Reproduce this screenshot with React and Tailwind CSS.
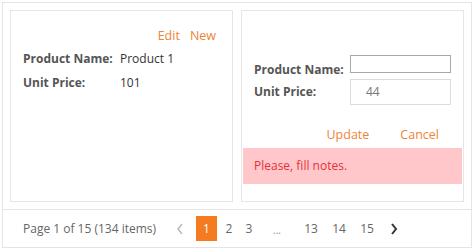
export default function App() {
  const font = "font-['Open_Sans','Noto_Sans',sans-serif]";
  return (
    <div className={`p-[2px] w-[474px] h-[250px] bg-white ${font} text-[12px] whitespace-nowrap`}>
      <div className="border border-[#e4e4e4] w-[470px] h-[246px] flex flex-col">
        <div className="flex gap-[8px] px-[7px] pt-[7px] pb-[7px] border-b border-[#e4e4e4]">
          {/* Card 1 */}
          <div className="flex-1 h-[192px] border border-[#e6e6e6] flex flex-col">
            <div className="flex justify-end items-center gap-[10px] pr-[16px] pt-[14px] h-[37px] text-[#ef8338] text-[12.5px]">
              <span>Edit</span>
              <span>New</span>
            </div>
            <div className="grid grid-cols-[97px_1fr] gap-y-[6px] pl-[12px] mt-[2px] leading-[18px]">
              <span className="font-bold text-[#555]">Product Name:</span>
              <span className="text-[#333]">Product 1</span>
              <span className="font-bold text-[#555]">Unit Price:</span>
              <span className="text-[#333]">101</span>
            </div>
          </div>
          {/* Card 2 */}
          <div className="flex-1 h-[192px] border border-[#e6e6e6] flex flex-col">
            <div className="grid grid-cols-[96px_101px] grid-rows-[24px_26px] pl-[12px] pt-[44px] leading-[18px]">
              <span className="font-bold text-[#555] self-end">Product Name:</span>
              <div className="h-[18px] self-start border border-[#a8a8a8] bg-white"></div>
              <span className="font-bold text-[#555] self-center">Unit Price:</span>
              <div className="h-[26px] border border-[#dcdcdc] bg-white flex items-center pl-[15px] text-[#777]">44</div>
            </div>
            <div className="flex justify-end gap-[31px] pr-[24px] mt-[18px] h-[24px] items-center text-[#ef8338] text-[12.5px]">
              <span>Update</span>
              <span>Cancel</span>
            </div>
            <div className="mx-[1px] mt-[1px] h-[36px] bg-[#ffc7ca] flex items-center pl-[11px] text-[#e8303a]">
              Please, fill notes.
            </div>
          </div>
        </div>
        <div className="flex-1 flex items-center pl-[20px] text-[#666]">
          <span className="w-[147px]">Page 1 of 15 (134 items)</span>
          <div className="flex items-center">
            <span className="w-[20px] flex justify-center text-[#bbb]">
              <svg width="8" height="12" viewBox="0 0 8 12"><path d="M6 1 L2 6 L6 11" fill="none" stroke="currentColor" strokeWidth="1.6"/></svg>
            </span>
            <span className="ml-[6px] w-[21px] h-[25px] bg-[#f47b20] text-white flex items-center justify-center">1</span>
            <span className="w-[24px] flex justify-center">2</span>
            <span className="w-[16px] flex justify-center">3</span>
            <span className="w-[40px] flex justify-center text-[10px] pt-[3px] text-[#888]">...</span>
            <span className="w-[28px] flex justify-center">13</span>
            <span className="w-[28px] flex justify-center">14</span>
            <span className="w-[28px] flex justify-center">15</span>
            <span className="w-[26px] flex justify-center text-[#333]">
              <svg width="8" height="12" viewBox="0 0 8 12"><path d="M2 1 L6 6 L2 11" fill="none" stroke="currentColor" strokeWidth="2"/></svg>
            </span>
          </div>
        </div>
      </div>
    </div>
  );
}
